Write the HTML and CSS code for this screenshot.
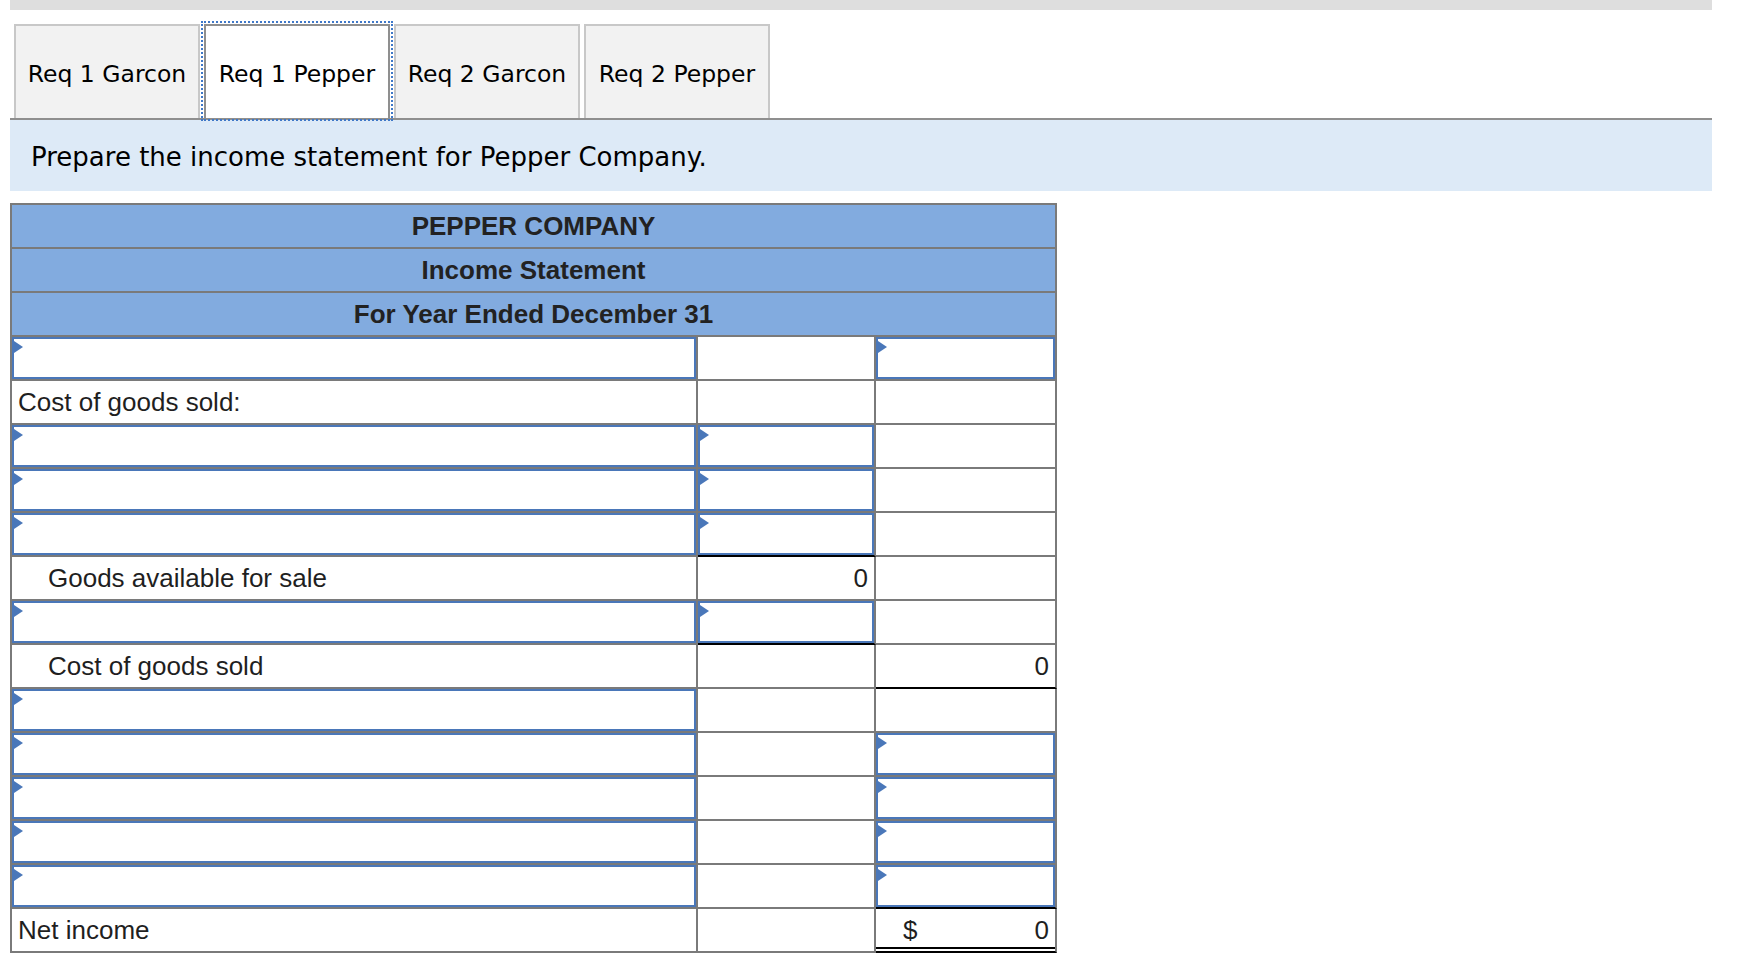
FILE: index.html
```html
<!DOCTYPE html>
<html lang="en">
<head>
<meta charset="utf-8">
<title>Pepper Company Income Statement</title>
<link rel="stylesheet" href="styles.css">
</head>
<body>
<div class="page">
  <div class="topbar"></div>
  <div class="tabs">
    <div class="tab">Req 1 Garcon</div>
    <div class="tab active">Req 1 Pepper</div>
    <div class="tab">Req 2 Garcon</div>
    <div class="tab">Req 2 Pepper</div>
  </div>
  <div class="instr">Prepare the income statement for Pepper Company.</div>

  <div class="stmt">
    <div class="cell head">PEPPER COMPANY</div>
    <div class="cell head">Income Statement</div>
    <div class="cell head">For Year Ended December 31</div>

    <div class="cell"><div class="inp"></div></div>
    <div class="cell"></div>
    <div class="cell"><div class="inp"></div></div>

    <div class="cell txt">Cost of goods sold:</div>
    <div class="cell"></div>
    <div class="cell"></div>

    <div class="cell"><div class="inp"></div></div>
    <div class="cell"><div class="inp"></div></div>
    <div class="cell"></div>

    <div class="cell"><div class="inp"></div></div>
    <div class="cell"><div class="inp"></div></div>
    <div class="cell"></div>

    <div class="cell"><div class="inp"></div></div>
    <div class="cell sum"><div class="inp"></div></div>
    <div class="cell"></div>

    <div class="cell txt indent">Goods available for sale</div>
    <div class="cell txt num">0</div>
    <div class="cell"></div>

    <div class="cell"><div class="inp"></div></div>
    <div class="cell sum"><div class="inp"></div></div>
    <div class="cell"></div>

    <div class="cell txt indent">Cost of goods sold</div>
    <div class="cell"></div>
    <div class="cell txt num sum">0</div>

    <div class="cell"><div class="inp"></div></div>
    <div class="cell"></div>
    <div class="cell"></div>

    <div class="cell"><div class="inp"></div></div>
    <div class="cell"></div>
    <div class="cell"><div class="inp"></div></div>

    <div class="cell"><div class="inp"></div></div>
    <div class="cell"></div>
    <div class="cell"><div class="inp"></div></div>

    <div class="cell"><div class="inp"></div></div>
    <div class="cell"></div>
    <div class="cell"><div class="inp"></div></div>

    <div class="cell"><div class="inp"></div></div>
    <div class="cell"></div>
    <div class="cell sum"><div class="inp"></div></div>

    <div class="cell txt">Net income</div>
    <div class="cell"></div>
    <div class="cell txt total"><span class="dollar">$</span><span>0</span></div>
  </div>
</div>
</body>
</html>
```

FILE: styles.css
```css
html, body {
  margin: 0;
  padding: 0;
  background: #ffffff;
}

.page {
  margin-left: 10px;
  width: 1702px;
}

.topbar {
  height: 10px;
  background: #dedede;
}

.tabs {
  display: flex;
  gap: 4px;
  padding-left: 4px;
  margin-top: 14px;
  border-bottom: 2px solid #8f8f8f;
}

.tab {
  box-sizing: border-box;
  width: 186px;
  height: 94px;
  padding-top: 4px;
  display: flex;
  align-items: center;
  justify-content: center;
  background: #f2f2f2;
  border: 2px solid #c8c8c8;
  border-bottom: none;
  font-family: "DejaVu Sans", Verdana, sans-serif;
  font-size: 23.5px;
  color: #000;
  white-space: nowrap;
}

.tab.active {
  background: #ffffff;
  border-color: #8f8f8f;
  outline: 2px dotted #3f78c8;
  outline-offset: 1px;
}

.instr {
  height: 71px;
  display: flex;
  align-items: center;
  padding-left: 21px;
  padding-top: 2px;
  box-sizing: border-box;
  background: #ddeaf7;
  font-family: "DejaVu Sans", Verdana, sans-serif;
  font-size: 26px;
  color: #000;
}

.stmt {
  margin-top: 12px;
  display: grid;
  grid-template-columns: 686px 178px 181px;
  width: max-content;
  border-top: 2px solid #7a7a7a;
  border-left: 2px solid #7a7a7a;
  font-family: "Liberation Sans", Arial, Helvetica, sans-serif;
  font-size: 26px;
  color: #1f1f1f;
}

.cell {
  box-sizing: border-box;
  height: 44px;
  border-right: 2px solid #7a7a7a;
  border-bottom: 2px solid #7a7a7a;
  background: #ffffff;
}

.cell.head {
  grid-column: 1 / span 3;
  background: #82abdf;
  font-weight: bold;
  display: flex;
  align-items: center;
  justify-content: center;
  color: #222222;
}

.cell.txt {
  display: flex;
  align-items: center;
  padding: 0 6px 0 6px;
  white-space: nowrap;
}

.cell.indent {
  padding-left: 36px;
}

.cell.num {
  justify-content: flex-end;
  padding-right: 6px;
}

.cell.sum {
  border-bottom-color: #000000;
}

.cell.total {
  justify-content: space-between;
  padding-left: 27px;
  padding-right: 6px;
  border-bottom-color: #000000;
  box-shadow: inset 0 -2px 0 #ffffff, inset 0 -4px 0 #000000;
}

.inp {
  position: relative;
  box-sizing: border-box;
  height: 42px;
  border: 2px solid #4a77b9;
  background: #ffffff;
}

.inp::before {
  content: "";
  position: absolute;
  top: 2px;
  left: 0;
  width: 0;
  height: 0;
  border-left: 9px solid #4a77b9;
  border-top: 6px solid transparent;
  border-bottom: 6px solid transparent;
}
```
